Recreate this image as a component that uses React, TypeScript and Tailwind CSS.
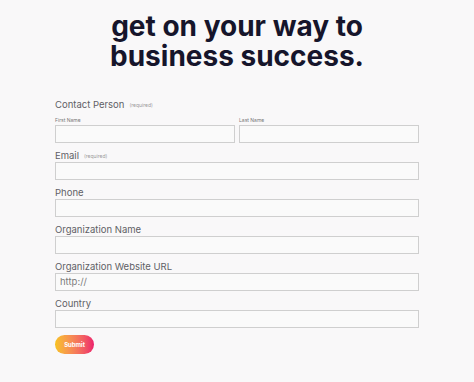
import React from "react";

const font = { fontFamily: "Inter, 'Noto Sans', sans-serif" };

function Label({ text, required }: { text: string; required?: boolean }) {
  return (
    <div className="flex items-center h-[12px] gap-[5px]">
      <span className="text-[9.5px] leading-[12px] text-[#5f5f66]">{text}</span>
      {required && <span className="text-[5px] leading-[6px] text-[#999]">(required)</span>}
    </div>
  );
}

function Input({ placeholder }: { placeholder?: string }) {
  return (
    <div className="h-[18px] w-full border border-[#cfcfcf] bg-[#fafafa] flex items-center px-[4px]">
      {placeholder && <span className="text-[9.5px] text-[#7a7a7a]">{placeholder}</span>}
    </div>
  );
}

function Field({ label, required, placeholder }: { label: string; required?: boolean; placeholder?: string }) {
  return (
    <div className="flex flex-col gap-0 mt-[7px]">
      <Label text={label} required={required} />
      <Input placeholder={placeholder} />
    </div>
  );
}

export default function App() {
  return (
    <div className="w-[474px] h-[382px] bg-[#f9f8f9] overflow-hidden" style={font}>
      <h1 className="pt-[11px] text-center text-[28px] leading-[30px] font-bold text-[#16152b]">
        get on your way to
        <br />
        business success.
      </h1>
      <div className="w-[364px] mx-auto mt-[28px]">
        <Label text="Contact Person" required />
        <div className="flex gap-[4px] mt-[5px]">
          <div className="flex-1 flex flex-col">
            <span className="text-[5px] leading-[8px] text-[#777]">First Name</span>
            <div className="mt-[1px]"><Input /></div>
          </div>
          <div className="flex-1 flex flex-col">
            <span className="text-[5px] leading-[8px] text-[#777]">Last Name</span>
            <div className="mt-[1px]"><Input /></div>
          </div>
        </div>
        <Field label="Email" required />
        <Field label="Phone" />
        <Field label="Organization Name" />
        <Field label="Organization Website URL" placeholder="http://" />
        <Field label="Country" />
        <button className="mt-[7px] w-[39px] h-[19px] rounded-full bg-gradient-to-r from-[#f7c21c] to-[#ec1b6b] text-white text-[6px] font-bold flex items-center justify-center">
          Submit
        </button>
      </div>
    </div>
  );
}
